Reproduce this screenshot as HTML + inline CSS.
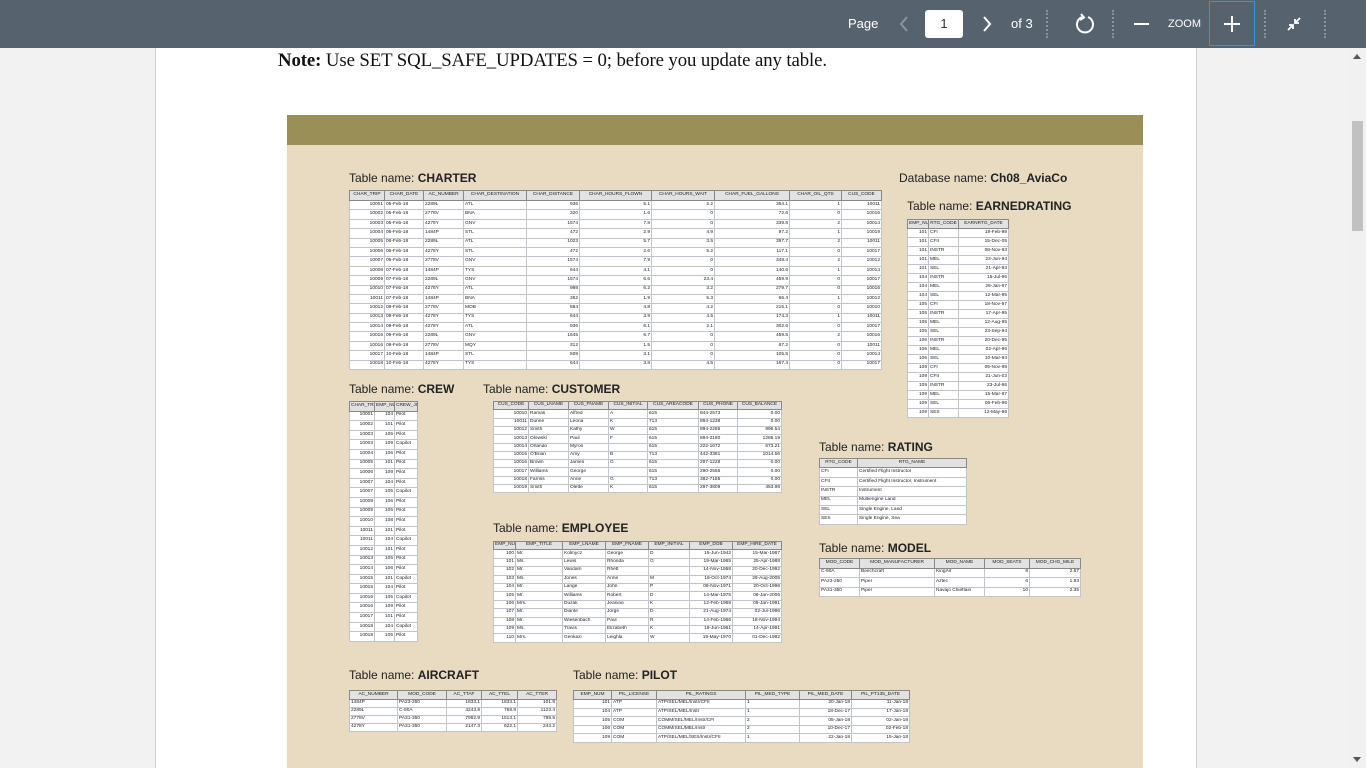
<!DOCTYPE html>
<html><head><meta charset="utf-8"><style>
*{margin:0;padding:0;box-sizing:border-box}
body{width:1366px;height:768px;overflow:hidden;background:#f2f2f2;position:relative;font-family:"Liberation Sans",sans-serif}
#tb{position:absolute;left:0;top:0;width:1366px;height:48px;background:#56636f;color:#fff}
#tb .t{position:absolute;top:16px;font-size:13px}
.sep{position:absolute;top:10px;height:28px;border-left:2px dotted #8a949d}
#page{position:absolute;left:155px;top:48px;width:1042px;height:720px;background:#fff;border-left:1px solid #d0d0d0;border-right:1px solid #d0d0d0}
#sb{position:absolute;left:1349px;top:48px;width:17px;height:720px;background:#f1f1f1}
#thumb{position:absolute;left:1352px;top:121px;width:11px;height:110px;background:#c1c1c1}
.note{position:absolute;left:278px;top:50px;font:18.8px "Liberation Serif",serif;color:#111;letter-spacing:-0.1px;white-space:nowrap}
#fig{position:absolute;left:287px;top:115px;width:856px;height:653px;background:#e8dbc2}
#band{position:absolute;left:287px;top:115px;width:856px;height:30px;background:#9a8f56}
.h{position:absolute;font-size:12px;color:#222;white-space:nowrap}
.h b{font-weight:bold}
table{position:absolute;border-collapse:collapse;background:#fff;table-layout:fixed;font-size:4.8px;color:#222}
td{border:1px solid #c0c4cc;overflow:hidden;white-space:nowrap;padding:0 1px;line-height:1}
tr:first-child td{background:#e2e2e2;border-color:#888;text-align:center}
.r{text-align:right}
</style></head><body>
<div id="tb">
 <span class="t" style="left:848px">Page</span>
 <svg style="position:absolute;left:898px;top:15px" width="12" height="18"><path d="M9 2 L3 9 L9 16" stroke="#8c959e" stroke-width="2" fill="none"/></svg>
 <div style="position:absolute;left:925px;top:10px;width:38px;height:28px;background:#fff;border-radius:3px;color:#333;font-size:13px;text-align:center;line-height:28px">1</div>
 <svg style="position:absolute;left:981px;top:15px" width="12" height="18"><path d="M3 2 L9 9 L3 16" stroke="#fff" stroke-width="2" fill="none"/></svg>
 <span class="t" style="left:1011px">of 3</span>
 <div class="sep" style="left:1046px"></div>
 <svg style="position:absolute;left:1074px;top:13px" width="22" height="22"><path d="M8 4 A8 8 0 1 0 14 4" stroke="#fff" stroke-width="2" fill="none"/><path d="M7 1 L10 4.5 L6 7" stroke="#fff" stroke-width="2" fill="none"/></svg>
 <div class="sep" style="left:1112px"></div>
 <div style="position:absolute;left:1134px;top:23px;width:15px;height:2px;background:#fff"></div>
 <span style="position:absolute;left:1168px;top:18px;font-size:11px">ZOOM</span>
 <div style="position:absolute;left:1209px;top:1px;width:46px;height:45px;border:1px solid #2a9be0"></div>
 <div style="position:absolute;left:1224px;top:23px;width:16px;height:2px;background:#fff"></div>
 <div style="position:absolute;left:1231px;top:16px;width:2px;height:16px;background:#fff"></div>
 <div class="sep" style="left:1264px"></div>
 <svg style="position:absolute;left:1284px;top:14px" width="20" height="20"><path d="M4 16 L9 11 M5 11 H9 V15 M16 4 L11 9 M15 9 H11 V5" stroke="#fff" stroke-width="1.8" fill="none"/></svg>
 <div class="sep" style="left:1324px"></div>
</div>
<div id="page"></div>
<div id="sb"><div style="position:absolute;left:4px;top:6px;border:4px solid transparent;border-bottom:5px solid #555;border-top:0"></div><div style="position:absolute;left:4px;bottom:6px;border:4px solid transparent;border-top:5px solid #555;border-bottom:0"></div></div>
<div id="thumb"></div>
<div class="note"><b>Note:</b> Use SET SQL_SAFE_UPDATES = 0; before you update any table.</div>
<div id="fig"></div><div id="band"></div>

<div class="h" style="left:349px;top:171px">Table name: <b>CHARTER</b></div>
<div class="h" style="left:899px;top:171px">Database name: <b>Ch08_AviaCo</b></div>
<div class="h" style="left:907px;top:199px">Table name: <b>EARNEDRATING</b></div>
<div class="h" style="left:349px;top:382px">Table name: <b>CREW</b></div>
<div class="h" style="left:483px;top:382px">Table name: <b>CUSTOMER</b></div>
<div class="h" style="left:493px;top:521px">Table name: <b>EMPLOYEE</b></div>
<div class="h" style="left:819px;top:440px">Table name: <b>RATING</b></div>
<div class="h" style="left:819px;top:541px">Table name: <b>MODEL</b></div>
<div class="h" style="left:349px;top:668px">Table name: <b>AIRCRAFT</b></div>
<div class="h" style="left:573px;top:668px">Table name: <b>PILOT</b></div>

<table style="left:349px;top:190px;width:532px" class="ch">
<colgroup><col style="width:35px"><col style="width:39px"><col style="width:40px"><col style="width:63px"><col style="width:53px"><col style="width:72px"><col style="width:63px"><col style="width:75px"><col style="width:52px"><col style="width:40px"></colgroup>
<tr style="height:10px"><td>CHAR_TRIP</td><td>CHAR_DATE</td><td>AC_NUMBER</td><td>CHAR_DESTINATION</td><td>CHAR_DISTANCE</td><td>CHAR_HOURS_FLOWN</td><td>CHAR_HOURS_WAIT</td><td>CHAR_FUEL_GALLONS</td><td>CHAR_OIL_QTS</td><td>CUS_CODE</td></tr>
<tr style="height:9.4px"><td class="r">10001</td><td>05-Feb-18</td><td>2289L</td><td>ATL</td><td class="r">936</td><td class="r">5.1</td><td class="r">2.2</td><td class="r">354.1</td><td class="r">1</td><td class="r">10011</td></tr>
<tr style="height:9.4px"><td class="r">10002</td><td>05-Feb-18</td><td>2778V</td><td>BNA</td><td class="r">320</td><td class="r">1.6</td><td class="r">0</td><td class="r">72.6</td><td class="r">0</td><td class="r">10016</td></tr>
<tr style="height:9.4px"><td class="r">10003</td><td>05-Feb-18</td><td>4278Y</td><td>GNV</td><td class="r">1574</td><td class="r">7.8</td><td class="r">0</td><td class="r">339.8</td><td class="r">2</td><td class="r">10014</td></tr>
<tr style="height:9.4px"><td class="r">10004</td><td>06-Feb-18</td><td>1484P</td><td>STL</td><td class="r">472</td><td class="r">2.9</td><td class="r">4.9</td><td class="r">97.2</td><td class="r">1</td><td class="r">10019</td></tr>
<tr style="height:9.4px"><td class="r">10005</td><td>06-Feb-18</td><td>2289L</td><td>ATL</td><td class="r">1023</td><td class="r">5.7</td><td class="r">3.5</td><td class="r">397.7</td><td class="r">2</td><td class="r">10011</td></tr>
<tr style="height:9.4px"><td class="r">10006</td><td>06-Feb-18</td><td>4278Y</td><td>STL</td><td class="r">472</td><td class="r">2.6</td><td class="r">5.2</td><td class="r">117.1</td><td class="r">0</td><td class="r">10017</td></tr>
<tr style="height:9.4px"><td class="r">10007</td><td>06-Feb-18</td><td>2778V</td><td>GNV</td><td class="r">1574</td><td class="r">7.9</td><td class="r">0</td><td class="r">348.4</td><td class="r">2</td><td class="r">10012</td></tr>
<tr style="height:9.4px"><td class="r">10008</td><td>07-Feb-18</td><td>1484P</td><td>TYS</td><td class="r">644</td><td class="r">4.1</td><td class="r">0</td><td class="r">140.6</td><td class="r">1</td><td class="r">10014</td></tr>
<tr style="height:9.4px"><td class="r">10009</td><td>07-Feb-18</td><td>2289L</td><td>GNV</td><td class="r">1574</td><td class="r">6.6</td><td class="r">23.4</td><td class="r">459.9</td><td class="r">0</td><td class="r">10017</td></tr>
<tr style="height:9.4px"><td class="r">10010</td><td>07-Feb-18</td><td>4278Y</td><td>ATL</td><td class="r">998</td><td class="r">6.2</td><td class="r">3.2</td><td class="r">279.7</td><td class="r">0</td><td class="r">10016</td></tr>
<tr style="height:9.4px"><td class="r">10011</td><td>07-Feb-18</td><td>1484P</td><td>BNA</td><td class="r">352</td><td class="r">1.9</td><td class="r">5.3</td><td class="r">66.4</td><td class="r">1</td><td class="r">10012</td></tr>
<tr style="height:9.4px"><td class="r">10012</td><td>08-Feb-18</td><td>2778V</td><td>MOB</td><td class="r">884</td><td class="r">4.8</td><td class="r">4.2</td><td class="r">215.1</td><td class="r">0</td><td class="r">10010</td></tr>
<tr style="height:9.4px"><td class="r">10013</td><td>08-Feb-18</td><td>4278Y</td><td>TYS</td><td class="r">644</td><td class="r">3.9</td><td class="r">4.5</td><td class="r">174.3</td><td class="r">1</td><td class="r">10011</td></tr>
<tr style="height:9.4px"><td class="r">10014</td><td>09-Feb-18</td><td>4278Y</td><td>ATL</td><td class="r">936</td><td class="r">6.1</td><td class="r">2.1</td><td class="r">302.6</td><td class="r">0</td><td class="r">10017</td></tr>
<tr style="height:9.4px"><td class="r">10015</td><td>09-Feb-18</td><td>2289L</td><td>GNV</td><td class="r">1645</td><td class="r">6.7</td><td class="r">0</td><td class="r">459.5</td><td class="r">2</td><td class="r">10016</td></tr>
<tr style="height:9.4px"><td class="r">10016</td><td>09-Feb-18</td><td>2778V</td><td>MQY</td><td class="r">312</td><td class="r">1.5</td><td class="r">0</td><td class="r">67.2</td><td class="r">0</td><td class="r">10011</td></tr>
<tr style="height:9.4px"><td class="r">10017</td><td>10-Feb-18</td><td>1484P</td><td>STL</td><td class="r">508</td><td class="r">3.1</td><td class="r">0</td><td class="r">105.5</td><td class="r">0</td><td class="r">10014</td></tr>
<tr style="height:9.4px"><td class="r">10018</td><td>10-Feb-18</td><td>4278Y</td><td>TYS</td><td class="r">644</td><td class="r">3.8</td><td class="r">4.5</td><td class="r">167.4</td><td class="r">0</td><td class="r">10017</td></tr>
</table>

<table style="left:349px;top:401px;width:68px">
<colgroup><col style="width:25px"><col style="width:20px"><col style="width:23px"></colgroup>
<tr style="height:9.6px"><td>CHAR_TRIP</td><td>EMP_NUM</td><td>CREW_JOB</td></tr>
<tr style="height:9.6px"><td class="r">10001</td><td class="r">104</td><td>Pilot</td></tr>
<tr style="height:9.6px"><td class="r">10002</td><td class="r">101</td><td>Pilot</td></tr>
<tr style="height:9.6px"><td class="r">10003</td><td class="r">105</td><td>Pilot</td></tr>
<tr style="height:9.6px"><td class="r">10003</td><td class="r">109</td><td>Copilot</td></tr>
<tr style="height:9.6px"><td class="r">10004</td><td class="r">106</td><td>Pilot</td></tr>
<tr style="height:9.6px"><td class="r">10005</td><td class="r">101</td><td>Pilot</td></tr>
<tr style="height:9.6px"><td class="r">10006</td><td class="r">109</td><td>Pilot</td></tr>
<tr style="height:9.6px"><td class="r">10007</td><td class="r">104</td><td>Pilot</td></tr>
<tr style="height:9.6px"><td class="r">10007</td><td class="r">105</td><td>Copilot</td></tr>
<tr style="height:9.6px"><td class="r">10008</td><td class="r">106</td><td>Pilot</td></tr>
<tr style="height:9.6px"><td class="r">10009</td><td class="r">105</td><td>Pilot</td></tr>
<tr style="height:9.6px"><td class="r">10010</td><td class="r">108</td><td>Pilot</td></tr>
<tr style="height:9.6px"><td class="r">10011</td><td class="r">101</td><td>Pilot</td></tr>
<tr style="height:9.6px"><td class="r">10011</td><td class="r">104</td><td>Copilot</td></tr>
<tr style="height:9.6px"><td class="r">10012</td><td class="r">101</td><td>Pilot</td></tr>
<tr style="height:9.6px"><td class="r">10013</td><td class="r">105</td><td>Pilot</td></tr>
<tr style="height:9.6px"><td class="r">10014</td><td class="r">106</td><td>Pilot</td></tr>
<tr style="height:9.6px"><td class="r">10015</td><td class="r">101</td><td>Copilot</td></tr>
<tr style="height:9.6px"><td class="r">10015</td><td class="r">104</td><td>Pilot</td></tr>
<tr style="height:9.6px"><td class="r">10016</td><td class="r">105</td><td>Copilot</td></tr>
<tr style="height:9.6px"><td class="r">10016</td><td class="r">109</td><td>Pilot</td></tr>
<tr style="height:9.6px"><td class="r">10017</td><td class="r">101</td><td>Pilot</td></tr>
<tr style="height:9.6px"><td class="r">10018</td><td class="r">104</td><td>Copilot</td></tr>
<tr style="height:9.6px"><td class="r">10018</td><td class="r">105</td><td>Pilot</td></tr>
</table>

<table style="left:493px;top:401px;width:288px">
<colgroup><col style="width:35px"><col style="width:40px"><col style="width:40px"><col style="width:39px"><col style="width:51px"><col style="width:39px"><col style="width:44px"></colgroup>
<tr style="height:8.4px"><td>CUS_CODE</td><td>CUS_LNAME</td><td>CUS_FNAME</td><td>CUS_INITIAL</td><td>CUS_AREACODE</td><td>CUS_PHONE</td><td>CUS_BALANCE</td></tr>
<tr style="height:8.3px"><td class="r">10010</td><td>Ramas</td><td>Alfred</td><td>A</td><td>615</td><td>844-2573</td><td class="r">0.00</td></tr>
<tr style="height:8.3px"><td class="r">10011</td><td>Dunne</td><td>Leona</td><td>K</td><td>713</td><td>894-1238</td><td class="r">0.00</td></tr>
<tr style="height:8.3px"><td class="r">10012</td><td>Smith</td><td>Kathy</td><td>W</td><td>615</td><td>894-2285</td><td class="r">896.54</td></tr>
<tr style="height:8.3px"><td class="r">10013</td><td>Olowski</td><td>Paul</td><td>F</td><td>615</td><td>894-2180</td><td class="r">1285.19</td></tr>
<tr style="height:8.3px"><td class="r">10014</td><td>Orlando</td><td>Myron</td><td></td><td>615</td><td>222-1672</td><td class="r">673.21</td></tr>
<tr style="height:8.3px"><td class="r">10015</td><td>O'Brian</td><td>Amy</td><td>B</td><td>713</td><td>442-3381</td><td class="r">1014.56</td></tr>
<tr style="height:8.3px"><td class="r">10016</td><td>Brown</td><td>James</td><td>G</td><td>615</td><td>297-1228</td><td class="r">0.00</td></tr>
<tr style="height:8.3px"><td class="r">10017</td><td>Williams</td><td>George</td><td></td><td>615</td><td>290-2556</td><td class="r">0.00</td></tr>
<tr style="height:8.3px"><td class="r">10018</td><td>Farriss</td><td>Anne</td><td>G</td><td>713</td><td>382-7185</td><td class="r">0.00</td></tr>
<tr style="height:8.3px"><td class="r">10019</td><td>Smith</td><td>Olette</td><td>K</td><td>615</td><td>297-3809</td><td class="r">453.98</td></tr>
</table>

<table style="left:493px;top:541px;width:288px">
<colgroup><col style="width:22px"><col style="width:47px"><col style="width:43px"><col style="width:43px"><col style="width:41px"><col style="width:43px"><col style="width:49px"></colgroup>
<tr style="height:8.4px"><td>EMP_NUM</td><td>EMP_TITLE</td><td>EMP_LNAME</td><td>EMP_FNAME</td><td>EMP_INITIAL</td><td>EMP_DOB</td><td>EMP_HIRE_DATE</td></tr>
<tr style="height:8.4px"><td class="r">100</td><td>Mr.</td><td>Kolmycz</td><td>George</td><td>D</td><td class="r">15-Jun-1942</td><td class="r">15-Mar-1987</td></tr>
<tr style="height:8.4px"><td class="r">101</td><td>Ms.</td><td>Lewis</td><td>Rhonda</td><td>G</td><td class="r">19-Mar-1965</td><td class="r">25-Apr-1988</td></tr>
<tr style="height:8.4px"><td class="r">102</td><td>Mr.</td><td>Vandam</td><td>Rhett</td><td></td><td class="r">14-Nov-1958</td><td class="r">20-Dec-1992</td></tr>
<tr style="height:8.4px"><td class="r">103</td><td>Ms.</td><td>Jones</td><td>Anne</td><td>M</td><td class="r">16-Oct-1974</td><td class="r">28-Aug-2005</td></tr>
<tr style="height:8.4px"><td class="r">104</td><td>Mr.</td><td>Lange</td><td>John</td><td>P</td><td class="r">08-Nov-1971</td><td class="r">20-Oct-1996</td></tr>
<tr style="height:8.4px"><td class="r">105</td><td>Mr.</td><td>Williams</td><td>Robert</td><td>D</td><td class="r">14-Mar-1975</td><td class="r">08-Jan-2006</td></tr>
<tr style="height:8.4px"><td class="r">106</td><td>Mrs.</td><td>Duzak</td><td>Jeanine</td><td>K</td><td class="r">12-Feb-1968</td><td class="r">05-Jan-1991</td></tr>
<tr style="height:8.4px"><td class="r">107</td><td>Mr.</td><td>Diante</td><td>Jorge</td><td>D</td><td class="r">21-Aug-1974</td><td class="r">02-Jul-1996</td></tr>
<tr style="height:8.4px"><td class="r">108</td><td>Mr.</td><td>Wiesenbach</td><td>Paul</td><td>R</td><td class="r">14-Feb-1966</td><td class="r">18-Nov-1994</td></tr>
<tr style="height:8.4px"><td class="r">109</td><td>Ms.</td><td>Travis</td><td>Elizabeth</td><td>K</td><td class="r">18-Jun-1961</td><td class="r">14-Apr-1991</td></tr>
<tr style="height:8.4px"><td class="r">110</td><td>Mrs.</td><td>Genkazi</td><td>Leighla</td><td>W</td><td class="r">19-May-1970</td><td class="r">01-Dec-1992</td></tr>
</table>

<table style="left:907px;top:219px;width:101px">
<colgroup><col style="width:21px"><col style="width:30px"><col style="width:50px"></colgroup>
<tr style="height:9px"><td>EMP_NUM</td><td>RTG_CODE</td><td>EARNRTG_DATE</td></tr>
<tr style="height:9px"><td class="r">101</td><td>CFI</td><td class="r">18-Feb-98</td></tr>
<tr style="height:9px"><td class="r">101</td><td>CFII</td><td class="r">15-Dec-05</td></tr>
<tr style="height:9px"><td class="r">101</td><td>INSTR</td><td class="r">08-Nov-93</td></tr>
<tr style="height:9px"><td class="r">101</td><td>MEL</td><td class="r">23-Jun-94</td></tr>
<tr style="height:9px"><td class="r">101</td><td>SEL</td><td class="r">21-Apr-93</td></tr>
<tr style="height:9px"><td class="r">104</td><td>INSTR</td><td class="r">15-Jul-96</td></tr>
<tr style="height:9px"><td class="r">104</td><td>MEL</td><td class="r">29-Jan-97</td></tr>
<tr style="height:9px"><td class="r">104</td><td>SEL</td><td class="r">12-Mar-95</td></tr>
<tr style="height:9px"><td class="r">105</td><td>CFI</td><td class="r">18-Nov-97</td></tr>
<tr style="height:9px"><td class="r">105</td><td>INSTR</td><td class="r">17-Apr-95</td></tr>
<tr style="height:9px"><td class="r">105</td><td>MEL</td><td class="r">12-Aug-95</td></tr>
<tr style="height:9px"><td class="r">105</td><td>SEL</td><td class="r">23-Sep-94</td></tr>
<tr style="height:9px"><td class="r">106</td><td>INSTR</td><td class="r">20-Dec-95</td></tr>
<tr style="height:9px"><td class="r">106</td><td>MEL</td><td class="r">02-Apr-96</td></tr>
<tr style="height:9px"><td class="r">106</td><td>SEL</td><td class="r">10-Mar-94</td></tr>
<tr style="height:9px"><td class="r">109</td><td>CFI</td><td class="r">05-Nov-98</td></tr>
<tr style="height:9px"><td class="r">109</td><td>CFII</td><td class="r">21-Jun-03</td></tr>
<tr style="height:9px"><td class="r">109</td><td>INSTR</td><td class="r">23-Jul-96</td></tr>
<tr style="height:9px"><td class="r">109</td><td>MEL</td><td class="r">15-Mar-97</td></tr>
<tr style="height:9px"><td class="r">109</td><td>SEL</td><td class="r">05-Feb-96</td></tr>
<tr style="height:9px"><td class="r">109</td><td>SES</td><td class="r">12-May-96</td></tr>
</table>

<table style="left:819px;top:458px;width:147px">
<colgroup><col style="width:38px"><col style="width:109px"></colgroup>
<tr style="height:9.4px"><td>RTG_CODE</td><td>RTG_NAME</td></tr>
<tr style="height:9.4px"><td>CFI</td><td>Certified Flight Instructor</td></tr>
<tr style="height:9.4px"><td>CFII</td><td>Certified Flight Instructor, Instrument</td></tr>
<tr style="height:9.4px"><td>INSTR</td><td>Instrument</td></tr>
<tr style="height:9.4px"><td>MEL</td><td>Multiengine Land</td></tr>
<tr style="height:9.4px"><td>SEL</td><td>Single Engine, Land</td></tr>
<tr style="height:9.4px"><td>SES</td><td>Single Engine, Sea</td></tr>
</table>

<table style="left:819px;top:558px;width:261px">
<colgroup><col style="width:40px"><col style="width:75px"><col style="width:50px"><col style="width:45px"><col style="width:51px"></colgroup>
<tr style="height:9.5px"><td>MOD_CODE</td><td>MOD_MANUFACTURER</td><td>MOD_NAME</td><td>MOD_SEATS</td><td>MOD_CHG_MILE</td></tr>
<tr style="height:9.5px"><td>C-90A</td><td>Beechcraft</td><td>KingAir</td><td class="r">8</td><td class="r">2.67</td></tr>
<tr style="height:9.5px"><td>PA23-250</td><td>Piper</td><td>Aztec</td><td class="r">6</td><td class="r">1.93</td></tr>
<tr style="height:9.5px"><td>PA31-350</td><td>Piper</td><td>Navajo Chieftain</td><td class="r">10</td><td class="r">2.35</td></tr>
</table>

<table style="left:349px;top:690px;width:207px">
<colgroup><col style="width:48px"><col style="width:49px"><col style="width:35px"><col style="width:36px"><col style="width:39px"></colgroup>
<tr style="height:9px"><td>AC_NUMBER</td><td>MOD_CODE</td><td>AC_TTAF</td><td>AC_TTEL</td><td>AC_TTER</td></tr>
<tr style="height:8px"><td>1484P</td><td>PA23-250</td><td class="r">1833.1</td><td class="r">1833.1</td><td class="r">101.8</td></tr>
<tr style="height:8px"><td>2289L</td><td>C-90A</td><td class="r">4243.8</td><td class="r">768.9</td><td class="r">1123.4</td></tr>
<tr style="height:8px"><td>2778V</td><td>PA31-350</td><td class="r">7992.9</td><td class="r">1513.1</td><td class="r">789.5</td></tr>
<tr style="height:8px"><td>4278Y</td><td>PA31-350</td><td class="r">2147.3</td><td class="r">622.1</td><td class="r">243.2</td></tr>
</table>

<table style="left:573px;top:690px;width:336px">
<colgroup><col style="width:38px"><col style="width:45px"><col style="width:89px"><col style="width:54px"><col style="width:52px"><col style="width:58px"></colgroup>
<tr style="height:9px"><td>EMP_NUM</td><td>PIL_LICENSE</td><td>PIL_RATINGS</td><td>PIL_MED_TYPE</td><td>PIL_MED_DATE</td><td>PIL_PT135_DATE</td></tr>
<tr style="height:8.6px"><td class="r">101</td><td>ATP</td><td>ATP/SEL/MEL/Instr/CFII</td><td>1</td><td class="r">20-Jan-18</td><td class="r">11-Jan-18</td></tr>
<tr style="height:8.6px"><td class="r">104</td><td>ATP</td><td>ATP/SEL/MEL/Instr</td><td>1</td><td class="r">18-Dec-17</td><td class="r">17-Jan-18</td></tr>
<tr style="height:8.6px"><td class="r">105</td><td>COM</td><td>COMM/SEL/MEL/Instr/CFI</td><td>2</td><td class="r">05-Jan-18</td><td class="r">02-Jan-18</td></tr>
<tr style="height:8.6px"><td class="r">106</td><td>COM</td><td>COMM/SEL/MEL/Instr</td><td>2</td><td class="r">10-Dec-17</td><td class="r">02-Feb-18</td></tr>
<tr style="height:8.6px"><td class="r">109</td><td>COM</td><td>ATP/SEL/MEL/SES/Instr/CFII</td><td>1</td><td class="r">22-Jan-18</td><td class="r">15-Jan-18</td></tr>
</table>
</body></html>
